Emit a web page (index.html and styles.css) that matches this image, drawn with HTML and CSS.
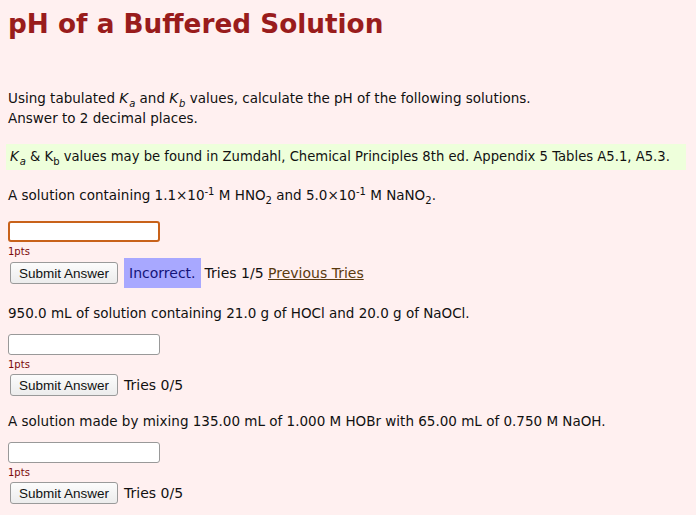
FILE: index.html
```html
<!DOCTYPE html>
<html lang="en">
<head>
    <meta charset="UTF-8">
    <title>pH of a Buffered Solution</title>
    <link rel="stylesheet" href="styles.css">
</head>
<body>

    <h1 class="title">pH of a Buffered Solution</h1>

    <p class="intro">
        Using tabulated <i>K<sub>a</sub></i> and <i>K<sub>b</sub></i> values, calculate the pH of the following solutions.<br>
        Answer to 2 decimal places.
    </p>

    <div class="note">
        <i>K<sub>a</sub></i> &amp; K<sub>b</sub> values may be found in Zumdahl, Chemical Principles 8th ed. Appendix 5 Tables A5.1, A5.3.
    </div>

    <div class="part">
        <p class="question formula">A solution containing 1.1&times;10<sup>-1</sup> M HNO<sub>2</sub> and 5.0&times;10<sup>-1</sup> M NaNO<sub>2</sub>.</p>
        <input type="text" class="answer wrong">
        <div class="pts">1pts</div>
        <div class="actions graded">
            <button>Submit Answer</button>
            <span class="incorrect">Incorrect.</span>
            <span class="tries">Tries 1/5 <a href="#">Previous Tries</a></span>
        </div>
    </div>

    <div class="part">
        <p class="question">950.0 mL of solution containing 21.0 g of HOCl and 20.0 g of NaOCl.</p>
        <input type="text" class="answer">
        <div class="pts">1pts</div>
        <div class="actions">
            <button>Submit Answer</button>
            <span class="tries">Tries 0/5</span>
        </div>
    </div>

    <div class="part">
        <p class="question">A solution made by mixing 135.00 mL of 1.000 M HOBr with 65.00 mL of 0.750 M NaOH.</p>
        <input type="text" class="answer">
        <div class="pts">1pts</div>
        <div class="actions">
            <button>Submit Answer</button>
            <span class="tries">Tries 0/5</span>
        </div>
    </div>

</body>
</html>
```

FILE: styles.css
```css
body {
    font-family: "DejaVu Sans", Verdana, sans-serif;
    font-size: 13.5px;
    color: #111;
    background-color: #fff0f0;
    margin: 0;
    padding: 0 8px;
}

sub, sup {
    font-size: 10px;
    line-height: 0;
}

i sub {
    margin-left: 1px;
}

.title {
    font-size: 26.3px;
    font-weight: bold;
    color: #991c1c;
    margin: 8px 0 0;
    line-height: 32px;
}

.intro {
    margin: 48px 0 0;
    line-height: 20px;
}

.note {
    background-color: #eeffdb;
    margin: 16px 2px 0 -2px;
    padding: 4px 4px;
    line-height: 18px;
    font-size: 13.2px;
    white-space: nowrap;
}

.part {
    display: flex;
    flex-direction: column;
    align-items: flex-start;
}

.question {
    margin: 15px 0 0;
    line-height: 20px;
}

.question.formula {
    padding-bottom: 5px;
}

.answer {
    width: 152px;
    height: 21px;
    box-sizing: border-box;
    margin: 11px 0 0;
    border: 1px solid #999;
    border-radius: 3px;
    background: #fff;
}

.answer.wrong {
    border: 2px solid #c8621a;
}

.pts {
    font-size: 10px;
    color: #7a0a0a;
    margin-top: 4px;
    line-height: 12px;
}

.actions {
    display: flex;
    align-items: center;
    gap: 6px;
    margin-top: 3px;
    font-size: 14px;
}

.actions.graded {
    margin-top: 0;
}

button {
    font-family: "Liberation Sans", Arial, sans-serif;
    font-size: 13.5px;
    color: #111;
    background: linear-gradient(#fcfcfc, #ececec);
    border: 1px solid #9a9a9a;
    border-radius: 3px;
    height: 22px;
    padding: 0 8px;
    margin-left: 2px;
}

.incorrect {
    background-color: #a8a8ff;
    color: #14147a;
    padding: 0 5px;
    line-height: 30px;
}

.incorrect + .tries {
    margin-left: -2px;
}

.tries a {
    color: #5a3a0e;
}
```
